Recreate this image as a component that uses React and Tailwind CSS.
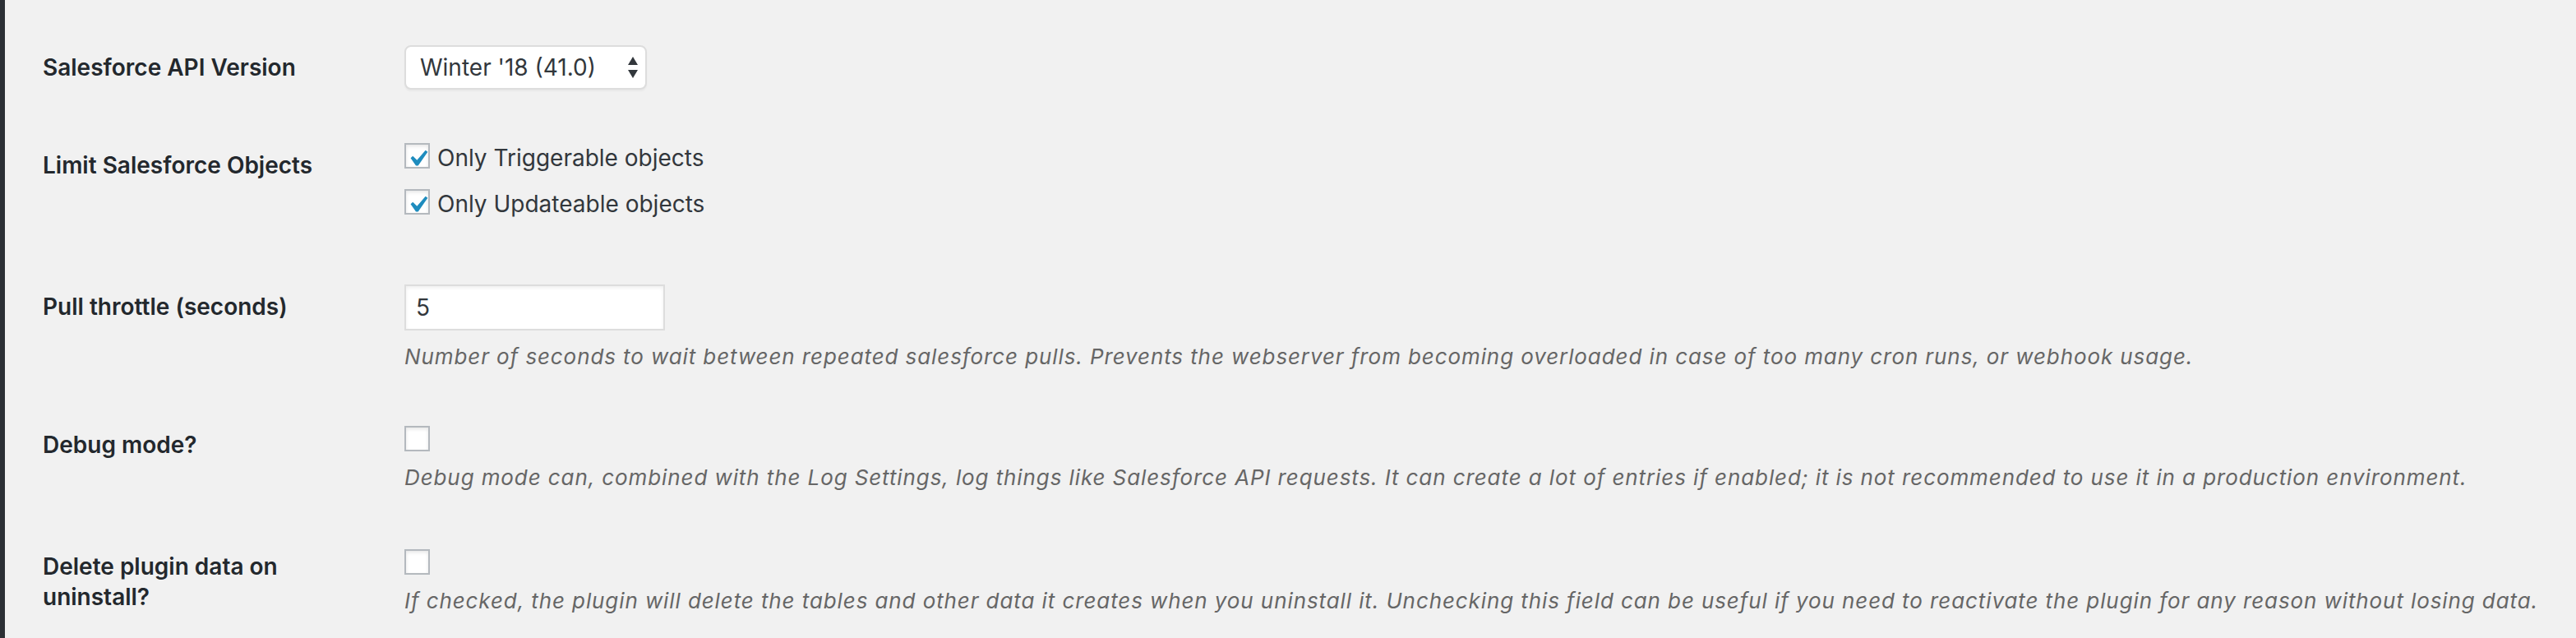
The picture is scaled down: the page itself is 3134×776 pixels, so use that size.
import React from 'react';

const descriptions = {
  throttle:
    'Number of seconds to wait between repeated salesforce pulls. Prevents the webserver from becoming overloaded in case of too many cron runs, or webhook usage.',
  debug:
    'Debug mode can, combined with the Log Settings, log things like Salesforce API requests. It can create a lot of entries if enabled; it is not recommended to use it in a production environment.',
  uninstall:
    'If checked, the plugin will delete the tables and other data it creates when you uninstall it. Unchecking this field can be useful if you need to reactivate the plugin for any reason without losing data.',
};

function Checkbox({ checked }) {
  return (
    <span className="relative block h-[31px] w-[31px] shrink-0 border-2 border-[#b4b9be] bg-white shadow-[inset_0_2px_4px_rgba(0,0,0,0.1)]">
      {checked && (
        <svg
          viewBox="0 0 20 20"
          className="absolute left-[-6px] top-[-3px] h-[40px] w-[40px] overflow-visible"
        >
          <path
            fill="#1e8cbe"
            d="M14.83 4.89l1.34.94-5.81 8.38H9.02L5.78 9.67l1.34-1.25 2.57 2.4z"
          />
        </svg>
      )}
    </span>
  );
}

function CheckRow({ label, checked }) {
  return (
    <label className="flex h-[36px] items-start text-[28px] leading-[36px] text-[#32373c]">
      <Checkbox checked={checked} />
      <span className="ml-[9px] whitespace-nowrap">{label}</span>
    </label>
  );
}

function Description({ children }) {
  return (
    <p className="mt-[14px] whitespace-nowrap text-[26px] italic leading-[36px] tracking-[0.9px] text-[#666]">
      {children}
    </p>
  );
}

function Row({ label, labelPad = '', center = false, className = '', children }) {
  return (
    <div className={`flex ${center ? 'items-center' : 'items-start'} ${className}`}>
      <div
        className={`w-[440px] shrink-0 text-[28px] font-semibold leading-[37px] text-[#23282d] ${labelPad}`}
      >
        {label}
      </div>
      <div className="flex flex-col">{children}</div>
    </div>
  );
}

export default function App() {
  return (
    <div className="flex h-[776px] w-full overflow-hidden bg-[#f1f1f1] [font-family:Inter,'Noto_Sans',sans-serif]">
      <div className="w-[6px] shrink-0 bg-[#2c3035]" />

      <div className="flex flex-col pl-[46px] pt-[55px]">
        <Row label="Salesforce API Version" center>
          <div className="relative flex h-[54px] w-[295px] items-center rounded-[8px] border-2 border-[#ddd] bg-white pl-[17px] text-[28px] text-[#32373c] shadow-[0_2px_2px_rgba(0,0,0,0.04)]">
            <span className="whitespace-nowrap">Winter '18 (41.0)</span>
            <svg
              viewBox="0 0 12 26"
              className="absolute right-[9px] top-[12px] h-[26px] w-[12px]"
            >
              <path d="M6 0L12 10H0z" fill="#32373c" />
              <path d="M0 16H12L6 26z" fill="#32373c" />
            </svg>
          </div>
        </Row>

        <Row label="Limit Salesforce Objects" labelPad="pt-[9px]" className="mt-[65px]">
          <div className="flex flex-col gap-[20px]">
            <CheckRow label="Only Triggerable objects" checked />
            <CheckRow label="Only Updateable objects" checked />
          </div>
        </Row>

        <Row label="Pull throttle (seconds)" labelPad="pt-[9px]" className="mt-[80px]">
          <div className="flex h-[56px] w-[317px] items-center border-2 border-[#ddd] bg-white pl-[12px] text-[28px] text-[#32373c] shadow-[inset_0_2px_4px_rgba(0,0,0,0.07)]">
            5
          </div>
          <Description>{descriptions.throttle}</Description>
        </Row>

        <Row label="Debug mode?" labelPad="pt-[5px]" className="mt-[66px]">
          <Checkbox />
          <Description>{descriptions.debug}</Description>
        </Row>

        <Row
          label={
            <>
              Delete plugin data on
              <br />
              uninstall?
            </>
          }
          labelPad="pt-[3px]"
          className="mt-[69px]"
        >
          <Checkbox />
          <Description>{descriptions.uninstall}</Description>
        </Row>
      </div>
    </div>
  );
}
